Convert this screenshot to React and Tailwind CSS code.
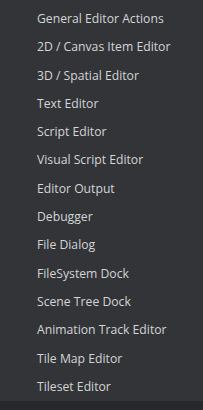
import React from 'react';

const items = [
  'General Editor Actions',
  '2D / Canvas Item Editor',
  '3D / Spatial Editor',
  'Text Editor',
  'Script Editor',
  'Visual Script Editor',
  'Editor Output',
  'Debugger',
  'File Dialog',
  'FileSystem Dock',
  'Scene Tree Dock',
  'Animation Track Editor',
  'Tile Map Editor',
  'Tileset Editor'
];

export default function App() {
  return (
    <div className="w-[203px] h-[410px] flex flex-col bg-[#323438] font-['Open_Sans',sans-serif]">
      {/* Section list */}
      <ul className="flex flex-col pt-[5px] flex-1">
        {items.map(item => (
          <li
            key={item}
            className="h-[28.3px] flex items-center pl-[37px] text-[12.2px] text-[#d4d5d6] whitespace-nowrap"
          >
            {item}
          </li>
        ))}
      </ul>
      <div className="h-[9px] bg-[#26282b]"></div>
    </div>
  );
}
